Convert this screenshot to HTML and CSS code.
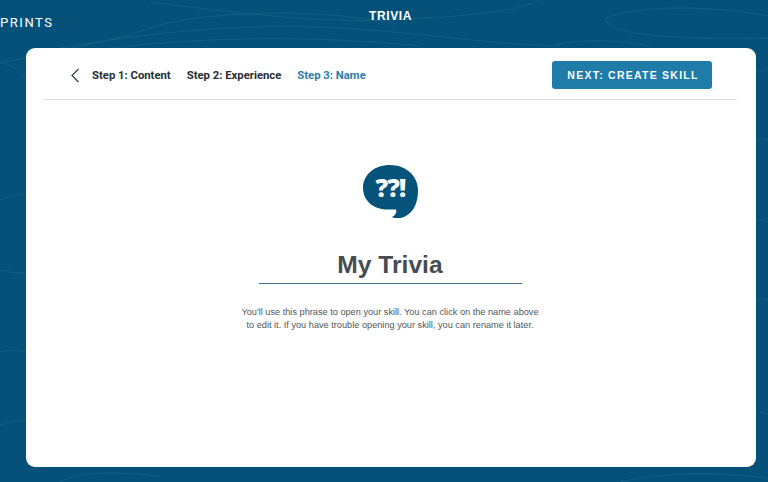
FILE: index.html
```html
<!DOCTYPE html>
<html lang="en">
<head>
<meta charset="utf-8">
<title>Trivia</title>
<link rel="stylesheet" href="styles.css">
</head>
<body>
<svg class="contours" viewBox="0 0 768 482" aria-hidden="true">
  <g fill="none" stroke="#2f7399" stroke-width="1" opacity=".42">
    <path d="M0 63C60 50 110 42 150 28S300 6 384 22"/>
    <path d="M60 48C140 34 240 22 340 28S480 44 560 46"/>
    <path d="M110 48C210 36 320 36 420 46"/>
    <path d="M150 2C260 16 320 22 384 20S520 12 540 0"/>
    <path d="M606 18C640 4 720 6 768 16M606 18C604 32 650 40 768 38"/>
    <path d="M552 46C580 38 620 40 650 46"/>
    <path d="M0 62C14 66 22 72 26 80"/>
    <path d="M0 200C10 196 18 194 26 194M0 270C10 272 18 274 26 272M0 352C10 350 18 350 26 352M0 425C10 422 18 420 26 420"/>
    <path d="M756 70C760 72 764 70 768 68M756 140C760 138 764 138 768 140M756 220C760 222 764 220 768 218M756 300C760 298 764 298 768 300M756 415C760 412 764 412 768 414"/>
    <path d="M60 482C80 470 120 472 160 476M620 482C660 472 720 472 768 478"/>
  </g>
</svg>
<header class="top">
  <span class="brand">PRINTS</span>
  <span class="title">TRIVIA</span>
</header>
<main class="card">
  <div class="toolbar">
    <div class="steps">
      <svg class="back" viewBox="0 0 8 15" aria-hidden="true"><path d="M7.500 1 1 7.500 7.500 14" fill="none" stroke="#333b42" stroke-width="1.200"/></svg>
      <span class="step">Step 1: Content</span>
      <span class="step">Step 2: Experience</span>
      <span class="step current">Step 3: Name</span>
    </div>
    <button class="next" type="button">NEXT: CREATE SKILL</button>
  </div>
  <section class="content">
    <svg class="logo" viewBox="0 0 55 53" aria-hidden="true">
      <path fill="#05527a" d="M27 0C43 0 55 11 55 25C55 36 52 47 41 52C36 54 31 53.500 29 52C33 50 34 47 33 44.500H24C10 44.500 0 35 0 23C0 10 11 0 27 0Z"/>
      <text class="logo-text" x="27.500" y="32" text-anchor="middle">??!</text>
    </svg>
    <h1 class="name">My Trivia</h1>
    <p class="hint">You'll use this phrase to open your skill. You can click on the name above<br>to edit it. If you have trouble opening your skill, you can rename it later.</p>
  </section>
</main>
</body>
</html>
```
FILE: styles.css
```css
* { box-sizing: border-box; }
html, body { height: 100%; }
body {
  margin: 0;
  position: relative;
  overflow: hidden;
  background: #05517a;
  font-family: "Liberation Sans", Arial, sans-serif;
}
.contours { position: absolute; inset: 0; width: 768px; height: 482px; }
.top {
  position: relative;
  height: 48px;
  display: flex;
  align-items: flex-start;
  color: #fff;
}
.brand {
  width: 369px;
  padding-top: 15px;
  font-family: Roboto, sans-serif;
  font-size: 13px;
  line-height: 15px;
  letter-spacing: 1.550px;
}
.title {
  padding-top: 9px;
  font-size: 12px;
  line-height: 14px;
  font-weight: 700;
  letter-spacing: .6px;
}
.card {
  position: relative;
  width: 730px;
  height: 419px;
  margin-left: 26px;
  background: #fff;
  border-radius: 9px;
}
.toolbar {
  height: 52px;
  margin: 0 19px;
  padding: 13px 25px 0 26px;
  display: flex;
  justify-content: space-between;
  align-items: flex-start;
  border-bottom: 1px solid #dcdfe1;
}
.steps {
  height: 28px;
  display: flex;
  align-items: center;
  gap: 16px;
}
.back { width: 8px; height: 15px; margin-right: -3px; }
.step {
  font-family: Roboto, sans-serif;
  font-size: 11.300px;
  font-weight: 700;
  color: #262d33;
}
.step.current { color: #2a7ea8; }
.next {
  width: 160px;
  height: 28px;
  padding: 0 0 0 2px;
  border: 0;
  border-radius: 3px;
  background: #1f7ba8;
  color: #fff;
  font-family: "Liberation Sans", Arial, sans-serif;
  font-size: 10.500px;
  font-weight: 700;
  letter-spacing: 1.250px;
}
.content {
  display: flex;
  flex-direction: column;
  align-items: center;
  padding: 65px 2px 0 0;
}
.logo { width: 55px; height: 53px; display: block; }
.logo-text {
  fill: #fff;
  font-family: "Open Sans", sans-serif;
  font-size: 25px;
  font-weight: 800;
  letter-spacing: -.8px;
}
.name {
  width: 263px;
  height: 37px;
  margin: 29px 0 0;
  border-bottom: 1px solid #3f6f94;
  color: #474c50;
  font-size: 24.600px;
  line-height: 36px;
  font-weight: 700;
  text-align: center;
}
.hint {
  margin: 22px 0 0;
  color: #50565a;
  font-size: 9.200px;
  line-height: 13px;
  text-align: center;
}
```
